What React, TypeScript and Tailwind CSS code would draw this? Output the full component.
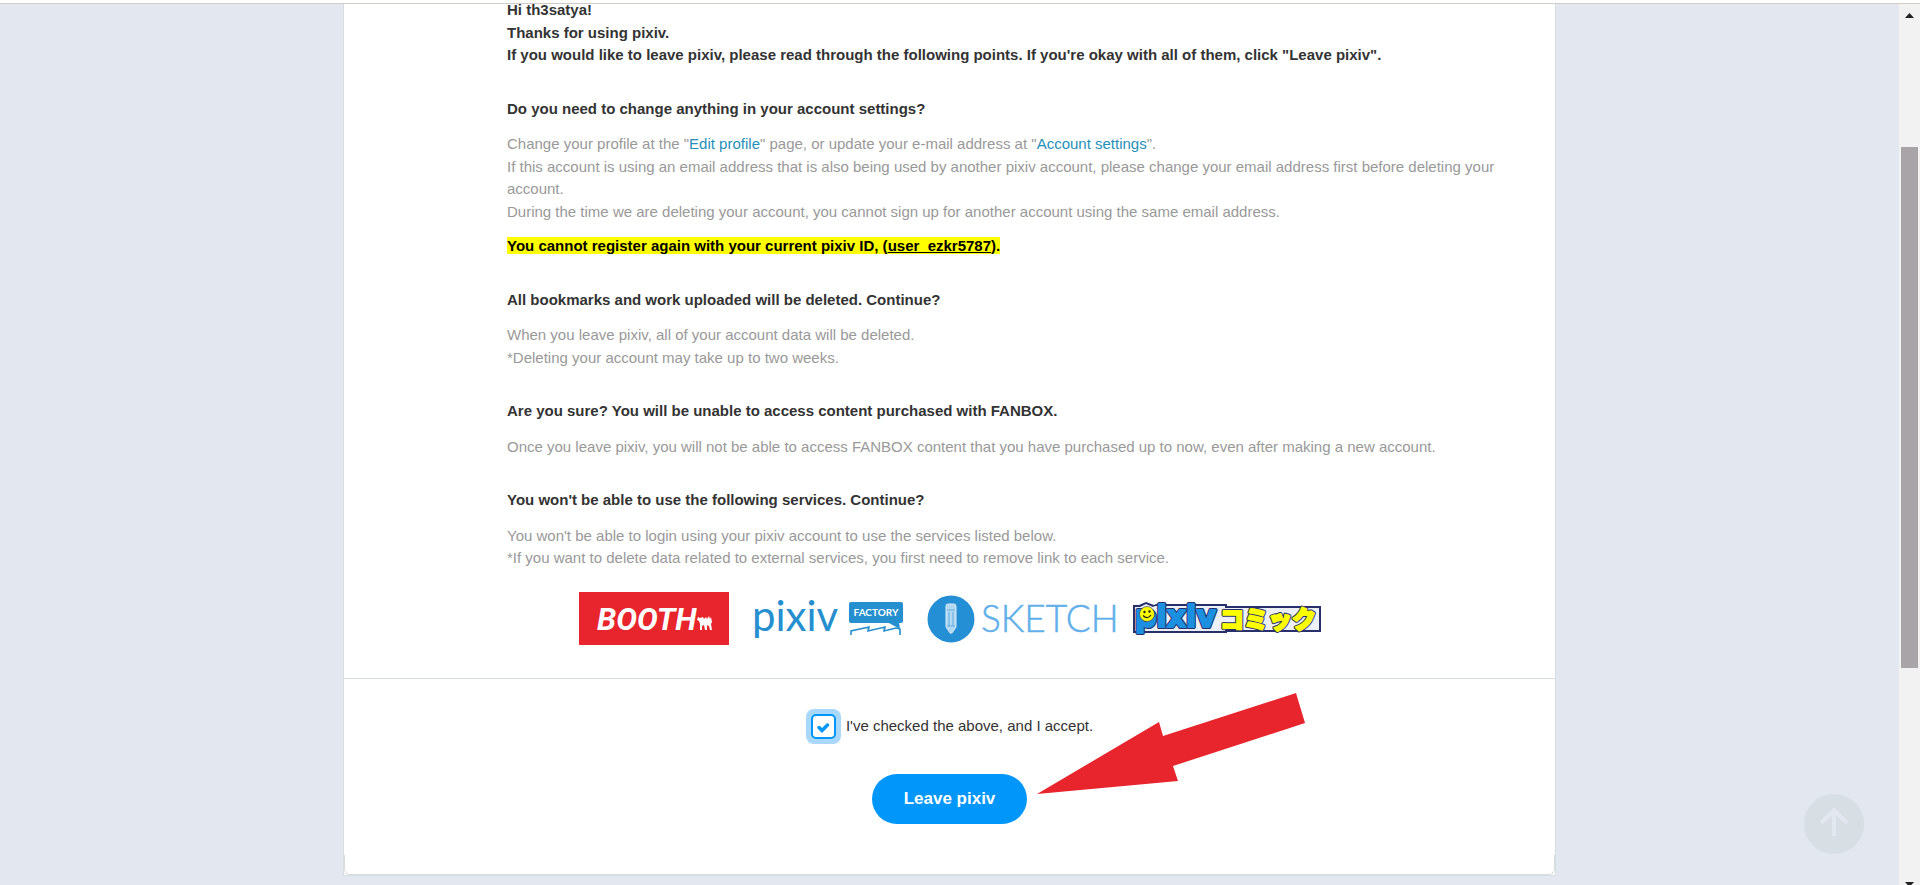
import { useState, type ReactNode } from "react"

function BoothLogo() {
  return (
    <svg viewBox="0 0 150 53" className="w-[150px] h-[53px]" role="img" aria-label="BOOTH">
      <rect width="150" height="53" fill="#e8242c" />
      <text
        x="18"
        y="38"
        fill="#fff"
        fontSize="31"
        fontWeight="700"
        fontStyle="italic"
        fontFamily="Roboto, sans-serif"
      >
        BOOTH
      </text>
      <path
        d="M119 25l2 1 3-1 1 2 2-2 1 2 2-3 1 3 1-2 1 5-1 2 1 6h-2l-1-4-2-1 0 5h-2l-1-5-2 1 0 4h-2v-6l-1-3-2-1z"
        fill="#fff"
      />
    </svg>
  )
}

function FactoryLogo() {
  return (
    <svg viewBox="0 0 150 53" className="w-[150px] h-[53px]" role="img" aria-label="pixiv FACTORY">
      <text x="-1" y="39" fill="#258fcf" fontSize="42" fontFamily="Lato, sans-serif">
        pixiv
      </text>
      <rect x="96" y="10" width="54" height="21" rx="2" fill="#258fcf" />
      <path d="M134 30h12l1 7z" fill="#258fcf" />
      <path
        d="M98 43v-4l18-4-1 4 17-4-1 4 12-3 4 1v6"
        fill="none"
        stroke="#258fcf"
        strokeWidth="1.6"
      />
      <text
        x="123"
        y="24"
        fill="#fff"
        fontSize="10"
        fontWeight="700"
        textAnchor="middle"
        fontFamily="Lato, sans-serif"
      >
        FACTORY
      </text>
    </svg>
  )
}

function SketchLogo() {
  return (
    <svg viewBox="0 0 190 53" className="w-[190px] h-[53px]" role="img" aria-label="SKETCH">
      <circle cx="24" cy="27" r="23.5" fill="#258fd6" />
      <path d="M19 14a2 2 0 0 1 2-2h6a2 2 0 0 1 2 2v21l-4 6h-2l-4-6z" fill="#b4d8f2" stroke="#d3e9f8" />
      <path d="M20 18h8M22 20v14M26 20v14M20 34h8" fill="none" stroke="#5fade0" />
      <text
        x="54"
        y="40"
        fill="#5fb0ea"
        stroke="#5fb0ea"
        strokeWidth="0.5"
        fontSize="37"
        fontWeight="300"
        fontFamily="Lato, sans-serif"
      >
        SKETCH
      </text>
    </svg>
  )
}

const comicLayers = [
  { id: "outline", width: 4, stroke: ["#27306b", "#27306b"] },
  { id: "fill", width: 2, stroke: ["#1c90e0", "#ffff00"] },
]

function ComicLogo() {
  return (
    <svg viewBox="0 0 188 53" className="w-[188px] h-[53px]" role="img" aria-label="pixivコミック">
      <path d="M0 13h6l7-3 8 3 2-1h71v2h94v26H94v1H0z" fill="#27306b" />
      <path d="M2 15h5l6-3 7 3 2-1h70v2h94v22H92v1H2z" fill="#eef0f8" />
      {comicLayers.map((layer) => (
        <g key={layer.id} strokeWidth={layer.width} strokeLinejoin="round" fontWeight="900">
          <text x="2" y="35" fill="#1c90e0" stroke={layer.stroke[0]} fontSize="30" fontFamily="'DejaVu Sans', sans-serif">
            pixiv
          </text>
          <text x="87" y="36" fill="#ffff00" stroke={layer.stroke[1]} fontSize="24" fontFamily="'Noto Sans CJK JP', sans-serif">
            コミック
          </text>
        </g>
      ))}
      <circle cx="14" cy="22" r="7.5" fill="#ffff00" stroke="#27306b" strokeWidth="0.6" />
      <circle cx="11.5" cy="20" r="1.2" fill="#222" />
      <circle cx="16.5" cy="19.5" r="1.2" fill="#222" />
      <path d="M10 23.5q4.500 4.500 8-.5" fill="none" stroke="#222" strokeWidth="1.3" />
    </svg>
  )
}

function Section({ title, children }: { title: string; children: ReactNode }) {
  return (
    <section className="mt-[31px]">
      <h2 className="font-bold text-[#333]">{title}</h2>
      <div className="mt-[13px] space-y-3">{children}</div>
    </section>
  )
}

export default function App() {
  const [accepted, setAccepted] = useState(true)

  return (
    <div className="h-screen flex flex-col overflow-hidden bg-white font-['Liberation_Sans',Arial,sans-serif] text-[15px] leading-normal text-[#999]">
      <div className="relative z-10 h-1 shrink-0 bg-white border-b border-[#d3cbc7]" />

      <div className="relative flex-1 min-h-0 flex">
        <main className="flex-1 bg-[#e3e7ef]">
          <div className="max-w-[1213px] mx-auto bg-white border border-t-0 border-[#d8dde2]">
            <div className="pl-[163px] pr-12 -mt-[5px]">
              <p className="font-bold text-[#333]">
                Hi th3satya!
                <br />
                Thanks for using pixiv.
                <br />
                If you would like to leave pixiv, please read through the following points. If you're
                okay with all of them, click "Leave pixiv".
              </p>

              <Section title="Do you need to change anything in your account settings?">
                <p>
                  Change your profile at the "
                  <a href="#profile" className="text-[#258fb8]">Edit profile</a>
                  " page, or update your e-mail address at "
                  <a href="#settings" className="text-[#258fb8]">Account settings</a>
                  ".
                  <br />
                  If this account is using an email address that is also being used by another pixiv
                  account, please change your email address first before deleting your account.
                  <br />
                  During the time we are deleting your account, you cannot sign up for another account
                  using the same email address.
                </p>
                <p className="font-bold text-black">
                  <mark className="bg-[#ffff00]">
                    You cannot register again with your current pixiv ID, (<u>user_ezkr5787</u>).
                  </mark>
                </p>
              </Section>

              <Section title="All bookmarks and work uploaded will be deleted. Continue?">
                <p>
                  When you leave pixiv, all of your account data will be deleted.
                  <br />
                  *Deleting your account may take up to two weeks.
                </p>
              </Section>

              <Section title="Are you sure? You will be unable to access content purchased with FANBOX.">
                <p>
                  Once you leave pixiv, you will not be able to access FANBOX content that you have
                  purchased up to now, even after making a new account.
                </p>
              </Section>

              <Section title="You won't be able to use the following services. Continue?">
                <p>
                  You won't be able to login using your pixiv account to use the services listed below.
                  <br />
                  *If you want to delete data related to external services, you first need to remove link
                  to each service.
                </p>
              </Section>
            </div>

            <div className="flex justify-center mt-[22px] mb-[33px]">
              <a href="#booth" className="mr-6"><BoothLogo /></a>
              <a href="#factory" className="mr-6"><FactoryLogo /></a>
              <a href="#sketch" className="mr-4"><SketchLogo /></a>
              <a href="#comic"><ComicLogo /></a>
            </div>

            <form
              className="border-t border-[#d8dde2] pt-[30px] flex flex-col items-center"
              onSubmit={(e) => e.preventDefault()}
            >
              <label className="flex items-center gap-[5px] text-[#333]">
                <span className="relative flex p-[5px] rounded-lg bg-[#a9d8fb]">
                  <input
                    type="checkbox"
                    checked={accepted}
                    onChange={(e) => setAccepted(e.target.checked)}
                    className="appearance-none w-[25px] h-[25px] rounded-[5px] border-2 border-[#0096fa] bg-white"
                  />
                  {accepted && (
                    <svg viewBox="0 0 25 25" className="absolute top-[5px] left-[5px] w-[25px] h-[25px] pointer-events-none">
                      <path d="M8 13.500l3 3 5.500-5.500" fill="none" stroke="#0096fa" strokeWidth="3.500" strokeLinecap="round" />
                    </svg>
                  )}
                </span>
                I've checked the above, and I accept.
              </label>

              <div className="relative mt-[30px]">
                <button
                  type="submit"
                  className="block h-[50px] w-[155px] rounded-full bg-[#0096fa] text-[17px] font-bold text-white"
                >
                  Leave pixiv
                </button>
                <svg
                  viewBox="0 0 268 101"
                  className="absolute left-[165px] bottom-[30px] w-[268px] h-[101px] max-w-none pointer-events-none"
                  aria-hidden="true"
                >
                  <path d="M0 101L122 29l4 14L259 0l9 30-132 43 5 15z" fill="#e8242c" />
                </svg>
              </div>
            </form>

            <div className="mt-[31px] h-5 border border-t-0 border-[#d8dde2] rounded-b-md" />
          </div>
        </main>

        {/* scrollbar */}
        <div className="w-[21px] shrink-0 bg-[#f1f2f1] flex flex-col items-center">
          <svg viewBox="0 0 9 5" className="mt-[9px] w-[9px] h-[5px]"><path d="M0 5l4.500-5L9 5z" fill="#222" /></svg>
          <div className="w-[17px] mt-[129px] grow-0 basis-[521px] bg-[#a8a4a8]" />
          <svg viewBox="0 0 9 5" className="mt-auto -mb-[2px] w-[9px] h-[5px]"><path d="M0 0l4.500 5L9 0z" fill="#222" /></svg>
        </div>

        <button
          type="button"
          aria-label="Back to top"
          className="absolute right-14 bottom-[31px] size-[60px] rounded-full bg-[#d7dfe4] flex items-center justify-center"
        >
          <svg viewBox="0 0 30 30" className="size-[30px] -mt-1" fill="none" stroke="#e3e7ef" strokeWidth="4">
            <path d="M15 29V3M2 16L15 3l13 13" />
          </svg>
        </button>
      </div>
    </div>
  )
}
